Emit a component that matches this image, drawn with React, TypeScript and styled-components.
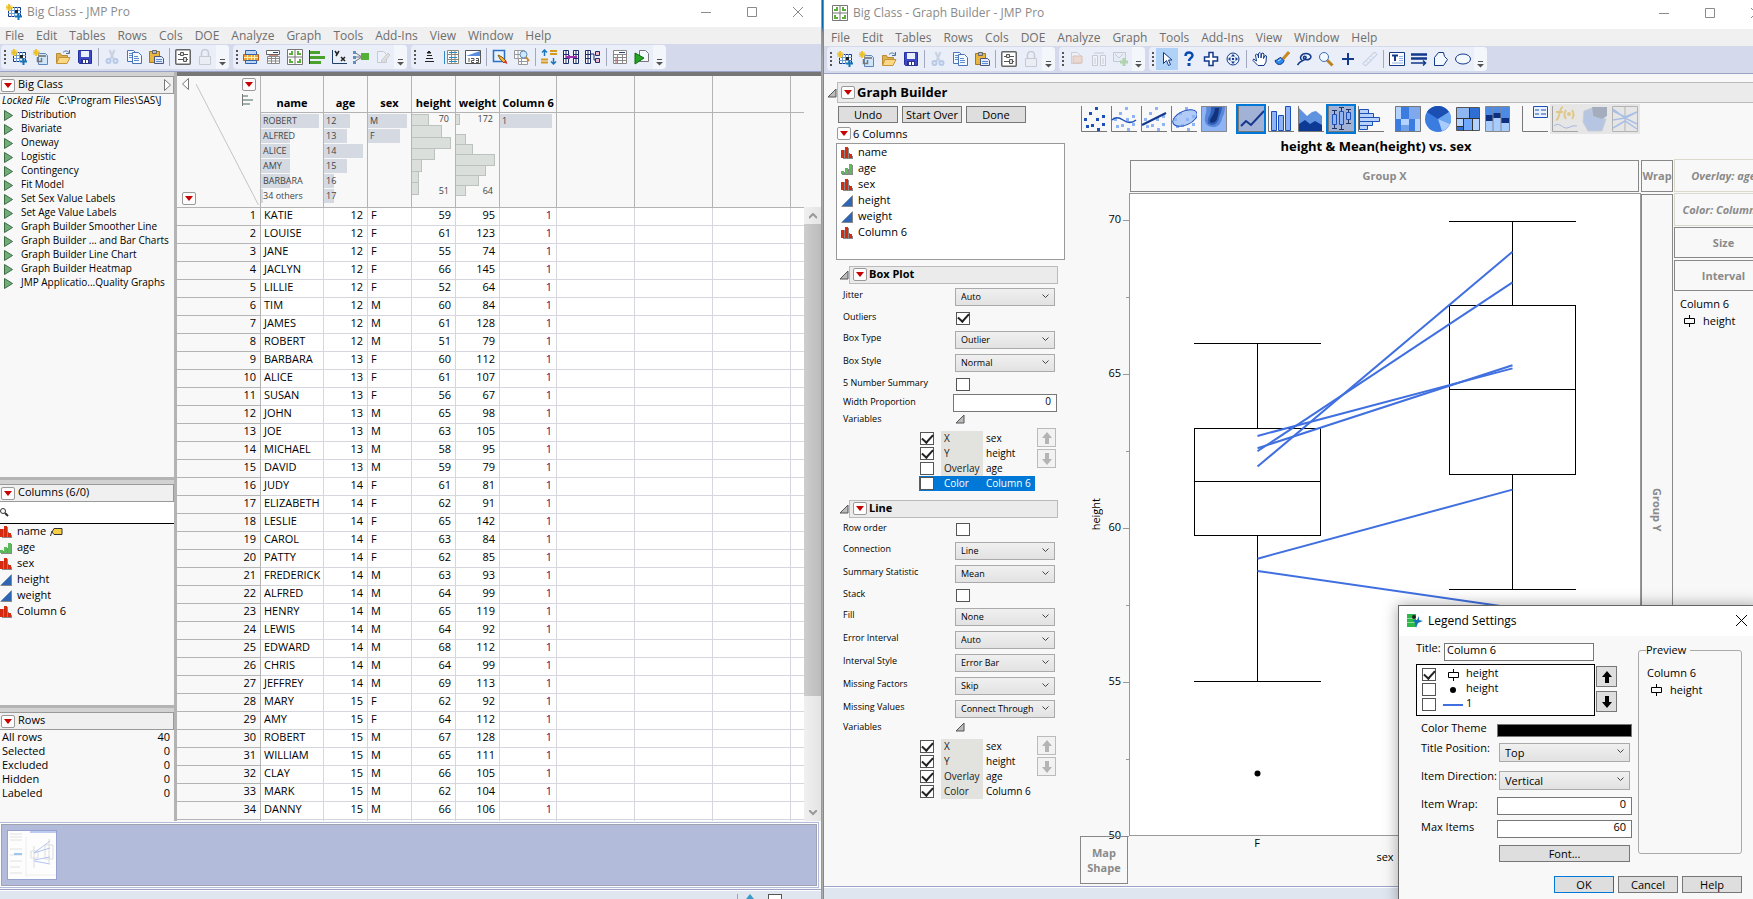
import React from "react";
import styled, { createGlobalStyle, css } from "styled-components";

const Global = createGlobalStyle`
  * { box-sizing: border-box; }
  body {
    margin: 0;
    overflow: hidden;
    background: #ababab;
    color: #000;
    font: 11px/14px "Open Sans", "Noto Sans", sans-serif;
  }
  button, input, select { font: inherit; color: inherit; margin: 0; padding: 0; border-radius: 0; }
  svg { display: block; }
`;

/* ---------- desktop and window frames ---------- */

const Desktop = styled.main`
  position: relative;
  display: grid;
  grid-template-columns: minmax(0, 821fr) 3px minmax(0, 929fr);
  height: 100vh;
  overflow: hidden;
`;

const DesktopGap = styled.div`
  background: linear-gradient(#0a6aa8 0 27px, #8a8a8a 32px, #ababab 60px);
  border-left: 1px solid #999;
  border-right: 1px solid #888;
`;

const Window = styled.section<{ $bleed?: number }>`
  display: flex;
  flex-direction: column;
  min-width: 0;
  height: calc(100vh + 16px);
  margin-right: ${(p) => -(p.$bleed ?? 0)}px;
  background: #f8f8f8;
`;

const TitleBar = styled.header<{ $h: number; $pad: number }>`
  display: flex;
  align-items: center;
  gap: 5px;
  flex: none;
  height: ${(p) => p.$h}px;
  padding: 0 0 4px ${(p) => p.$pad}px;
  background: #fff;
  color: #8a8a8a;
`;

const WindowName = styled.h1`
  flex: 1;
  margin: 0;
  font-size: 12px;
  font-weight: 400;
`;

const Caption = styled.button`
  display: grid;
  place-items: center;
  width: 46px;
  height: 20px;
  margin-left: -5px;
  border: 0;
  background: none;
  color: #8a8a8a;
`;

const MenuBar = styled.nav<{ $pad: number }>`
  display: flex;
  flex: none;
  gap: 12px;
  height: 17px;
  padding-left: ${(p) => p.$pad}px;
  background: #f0f0f0;
`;

const MenuItem = styled.button`
  border: 0;
  background: none;
  color: #6e6e6e;
  font-size: 12px;
  line-height: 16px;
`;

const ToolBar = styled.div<{ $pad: number }>`
  display: flex;
  flex: none;
  gap: 4px;
  height: 28px;
  padding: 1px 0 2px ${(p) => p.$pad}px;
  background: #d4d9ec;
  border-bottom: 1px solid #9aa2c8;
`;

const ToolGroup = styled.div`
  display: flex;
  align-items: center;
  background: #e9eef8;
  border-radius: 4px;
`;

const Grip = styled.i`
  width: 7px;
  height: 16px;
  background: linear-gradient(#555 2px, transparent 2px) 3px 1px / 2px 4px repeat-y;
`;

const ToolSep = styled.i`
  width: 1px;
  height: 18px;
  margin: 0 2px;
  background: #a4a8bc;
`;

const ToolButton = styled.button<{ $on?: boolean; $off?: boolean }>`
  display: grid;
  place-items: center;
  width: 22px;
  height: 22px;
  border: 0;
  background: ${(p) => (p.$on ? "#b0d2f7" : "none")};
  opacity: ${(p) => (p.$off ? 0.35 : 1)};
`;

const Overflow = styled.button`
  align-self: stretch;
  display: grid;
  place-items: end center;
  width: 13px;
  padding-bottom: 3px;
  border: 0;
  border-radius: 0 4px 4px 0;
  background: #f3f6fb;
`;

const StatusBar = styled.footer<{ $h: number }>`
  display: flex;
  justify-content: flex-end;
  gap: 14px;
  flex: none;
  height: ${(p) => p.$h}px;
  padding: 4px 39px 0 0;
  background: #e0e6f0;
  border-top: 1px solid #9aa2c8;
  box-shadow: inset 0 1px #fff;
`;

const StatusRule = styled.i`
  width: 1px;
  margin-right: -6px;
  background: #9aa2c8;
`;

/* ---------- toolbar drawings ---------- */

const B = "#12398a";
const Sheet = () => (
  <>
    <path d="M2.500 3.500h12v9h-12z" fill="#fff" stroke={B} />
    <path d="M2 6.500h13M2 9.500h13M5.500 3v10M8.500 3v10M11.500 3v10" stroke="#6d9bd6" />
    <path d="M9 6h3v3H9z" fill="#222" />
    <path d="M12.500 9v7M9 12.500h7" stroke="#1673b5" strokeWidth="2" />
    <path d="M3 0v7M0 3.500h7" stroke="#f2c62a" strokeWidth="2" />
    <path d="M.5 1l5 5M5.500 1l-5 5" stroke="#e8b820" />
  </>
);
const Page = ({ x = 3, y = 1, c = "#4a74b8" }: { x?: number; y?: number; c?: string }) => (
  <path d={`M${x}.5 ${y}.5h6l3 3v8h-9z`} fill="#f4f8ff" stroke={c} />
);

const drawings: Record<string, React.ReactNode> = {
  newTable: <Sheet />,
  newScript: (
    <>
      <path d="M5.500 4.500h7l2 2v9h-9z" fill="#cfe6fa" stroke="#5d87b8" />
      <path d="M5 7h8" stroke="#888" strokeWidth="2" />
      <path d="M4.500 8v4.500h4V9" stroke="#777" strokeWidth="1.500" fill="none" />
      <path d="M3 0v7M0 3.500h7" stroke="#f2c62a" strokeWidth="2" />
      <path d="M.5 1l5 5M5.500 1l-5 5" stroke="#e8b820" />
    </>
  ),
  open: (
    <>
      <path d="M1.500 14V4.500h4l1 2h6V9" fill="#e0b04e" stroke="#b88a34" />
      <path d="M1.500 14.500L4 8.500h11l-3 6z" fill="#fbd883" stroke="#c3953a" />
      <path d="M8 3.500c2-2 4-2 6 0M14.500 1v3.500H11" stroke="#4f7096" fill="none" />
    </>
  ),
  save: (
    <>
      <path d="M1.500 1.500h13v13h-12l-1-1z" fill="#3f49c8" stroke="#25309a" />
      <path d="M4 2h8v6H4z" fill="#e8f1fd" />
      <path d="M4 10h8v5H4z" fill="#2a3488" />
      <path d="M6 11h2v3H6zM9 11h2v3H9z" fill="#fff" />
    </>
  ),
  cut: (
    <>
      <path d="M5.500 1l4 9M10.500 1l-4 9" stroke="#8ea0bc" strokeWidth="2" />
      <circle cx="4.500" cy="12" r="2" fill="none" stroke="#5e86c8" strokeWidth="2" />
      <circle cx="11.500" cy="12" r="2" fill="none" stroke="#5e86c8" strokeWidth="2" />
    </>
  ),
  copy: (
    <>
      <Page x={1} y={1} />
      <Page x={6} y={3} />
      <path d="M8 7.500h4M8 9.500h5M8 11.500h5M3 4.500h3M3 6.500h3M3 8.500h3" stroke="#5d8cd0" />
    </>
  ),
  paste: (
    <>
      <path d="M1.500 2.500h10v11h-10z" fill="#e8b53e" stroke="#a4781c" />
      <path d="M4.500 1.500h4v3h-4z" fill="#b9b9c8" stroke="#666" />
      <path d="M6.500 7.500h7l2 2v5h-9z" fill="#e3ebfa" stroke="#4a5578" />
      <path d="M8 10.500h6M8 12.500h6" stroke="#5d8cd0" />
    </>
  ),
  prefs: (
    <>
      <rect x=".75" y=".75" width="14.500" height="14.500" rx="1" fill="#fff" stroke="#666" strokeWidth="1.500" />
      <path d="M3 5.500h3M9 5.500h4M3 10.500h5M11 10.500h2" stroke="#555" />
      <path d="M5.500 3.500h3v3h-3zM8.500 8.500h3v4h-3z" fill="#ddd" stroke="#555" />
    </>
  ),
  lock: (
    <>
      <path d="M4.500 7V4a3.500 3.500 0 017 0v3" fill="none" stroke="#888" strokeWidth="1.500" />
      <path d="M2.500 7.500h11v8h-11z" fill="#eee" stroke="#888" />
    </>
  ),
  database: (
    <>
      <path d="M.5 5.500h15v6H.5z" fill="#f0a53a" stroke="#b85a1c" />
      <path d="M2.500 1.500h10l1 1v3h-11zM2.500 11.500h11v3h-11z" fill="#bcd6f5" stroke="#2f62ac" />
      <path d="M1 8.500h14M4.500 6v5M8.500 6v5M11.500 6v5" stroke="#fff2b0" />
    </>
  ),
  summary: (
    <>
      <path d="M1.500 1.500h13v4h-13z" fill="#fff" stroke="#666" />
      <path d="M8 3.500h5" stroke="#26417c" />
      <path d="M2.500 7.500h12v7h-12zM6.500 7v8M10.500 7v8M2 9.500h13M2 12h13" fill="#fff" stroke="#888" />
      <path d="M4 6.500h9" stroke="#d98a7a" />
    </>
  ),
  graph: (
    <>
      <path d="M.5.5h15v15H.5zM8 0v16M0 8h16" fill="#fff" stroke="#777" />
      <path d="M2 6V4h2V2h2v4zM10 6V2h2v2h2v2zM2 14v-4h2v2h2v2zM10 14v-2h2v-2h2v4z" fill="#5fae3c" />
    </>
  ),
  bars: (
    <>
      <path d="M.5 1v14" stroke="#333" />
      <path d="M1 2h10v3H1zM1 7h15v3H1zM1 12h11v3H1z" fill="#4aa22c" />
    </>
  ),
  yx: (
    <>
      <path d="M1.500 1v13.500H16" stroke="#1e3f66" fill="none" />
      <path d="M4 2l2 3M8 2L5 7M10 8l4 4M14 8l-4 4" stroke="#222" strokeWidth="1.500" />
    </>
  ),
  modeling: (
    <>
      <path d="M1 3l8 5-8 5M1 8h8" stroke="#777" fill="none" />
      <path d="M0 2h3v3H0zM0 7h3v3H0zM0 12h3v3H0z" fill="#5b8fc8" />
      <path d="M8 4h8v7H8z" fill="#55b03a" />
    </>
  ),
  notes: (
    <>
      <Page x={2} y={2} c="#888" />
      <path d="M6 12l7-8 2 2-7 8z" fill="#d9c8a0" stroke="#888" />
    </>
  ),
  sort: <path d="M8 2l2 2H6zM6 6.500h5M5 9.500h7M4 12.500h9" stroke="#222" fill="#222" />,
  recode: (
    <>
      <path d="M4.500 1.500h11v13h-11zM8.500 1v14M12 1v14M4 5.500h12M4 10.500h12" fill="#fff" stroke="#8a8a7a" />
      <path d="M1.500 2v13M6 3.500h8M6 8.500h8M6 12.500h8" stroke="#3289bf" />
    </>
  ),
  format: (
    <>
      <path d="M.5 1.500h15v13H.5z" fill="#fff" stroke="#555" />
      <path d="M1 7l14-5v5z" fill="#5a8ce0" />
      <path d="M4 9v4M6 9.500h3v2H6.500v2H9M11 9.500h2.500v4H11M11 11.500h2" stroke="#555" fill="none" />
    </>
  ),
  select: (
    <>
      <path d="M1.500 1.500h11v11h-11z" fill="#e6f3ff" stroke="#2e6fc4" strokeWidth="1.500" />
      <path d="M6 6l2 4 4 4 2-2-4-4z" fill="#f4b73a" stroke="#8a5a14" />
      <path d="M11.500 13.500l2.500-2.500 1.500 4z" fill="#c33" />
    </>
  ),
  find: (
    <>
      <path d="M.5 1.500h10v8H.5zM4.500 9.500h9v6h-9zM4 1v9M7.500 1v14M.5 5.500h10M4.500 12.500h9" fill="#fff" stroke="#999" />
      <circle cx="9.500" cy="5.500" r="3.500" fill="#cfe8fb" stroke="#5b87b8" />
      <path d="M12 8l3 4" stroke="#c98a2a" strokeWidth="2" />
    </>
  ),
  swap: (
    <>
      <path d="M3.500 7V1M1 3.500L3.500 1 6 3.500M12.500 9v6M10 12.500l2.500 2.500 2.500-2.500" stroke="#1f77bd" strokeWidth="1.500" fill="none" />
      <path d="M9 2h7M9 5h7M0 10.500h7M0 13.500h7" stroke="#d79a20" strokeWidth="2" />
    </>
  ),
  join: (
    <>
      <path d="M.5 1.500h5v13h-5zM10.500 1.500h5v13h-5zM0 5.500h6M0 9.500h6M10 5.500h6M10 9.500h6M3 1v14M13 1v14" fill="#fff" stroke="#1b2e6a" />
      <path d="M3 8h11M6 6v4" stroke="#a02fae" strokeWidth="2" />
    </>
  ),
  split: (
    <>
      <path d="M.5 1.500h5v13h-5zM0 5.500h6M0 9.500h6M3 1v14" fill="#fff" stroke="#1b2e6a" />
      <path d="M6 5h3v6h5" fill="none" stroke="#1b2e6a" />
      <path d="M10.500 2.500h4v4h-4zM10.500 9.500h4v4h-4z" fill="#f4b9c9" stroke="#1b2e6a" />
    </>
  ),
  tabulate: (
    <>
      <path d="M1.500 1.500h13v13h-13zM1 5.500h14M1 8.500h14M1 11.500h14M5.500 5v10M10.500 5v10" fill="#fff" stroke="#888" />
      <path d="M7 3.500h6" stroke="#26417c" />
      <path d="M3 10h2M3 13h2" stroke="#c55" />
    </>
  ),
  run: (
    <>
      <Page x={5} y={1} c="#777" />
      <path d="M1 4l9 5-9 6z" fill="#22a522" stroke="#0b6b0b" />
    </>
  ),
  rerun: (
    <>
      <Page x={2} y={1} c="#999" />
      <path d="M4 5h9v7H4z" fill="#f1b28a" stroke="#c86a3a" />
    </>
  ),
  compare: <path d="M1.500 4.500h5v10h-5zM9.500 4.500h5v10h-5zM3 2h10M4 7v6M12 7v6" fill="#fff" stroke="#888" />,
  addGraph: (
    <>
      <path d="M.5 1.500h12v9H.5zM2 3l4 4 4-4" fill="#dfeaf5" stroke="#888" />
      <path d="M11 7v8M7 11h8" stroke="#4aa22c" strokeWidth="3" />
    </>
  ),
  arrow: <path d="M4.500 1.500v11l3-3 2 5 2-1-2-4.500h3.500z" fill="#fff" stroke={B} />,
  help: (
    <>
      <path d="M4.500 5c0-4.500 7-4.500 7-.5 0 2.500-3.500 2.500-3.500 5.500" fill="none" stroke="#0a4bb0" strokeWidth="2.500" />
      <path d="M6.500 12h3v3h-3z" fill="#0a4bb0" />
    </>
  ),
  plus: <path d="M6 1.500h4V6h4.500v4H10v4.500H6V10H1.500V6H6z" fill="#fff" stroke={B} strokeWidth="1.500" />,
  scroller: (
    <>
      <circle cx="8" cy="8" r="6" fill="#eaf1fc" stroke={B} />
      <path d="M8 3l2 2.500H6zM8 13l2-2.500H6zM3 8l2.500-2v4zM13 8l-2.500-2v4zM7 7h2v2H7z" fill={B} />
    </>
  ),
  hand: (
    <path
      d="M6 14.500L1 9.500 1.500 8l3 2L3.500 4l1-1L6 4l.5 3V2.500L8 1.500l1 1V7l.5-4.500L11 2l1 1-.5 4.500L13 4.500l1.500.5L14 11l-2 3.500z"
      fill="#fff"
      stroke={B}
    />
  ),
  brush: (
    <>
      <path d="M9 8l6-7" stroke="#c98a20" strokeWidth="3" />
      <path d="M1 9.500c2 0 4-3 6-3l3 3c-1 5-8 5.500-9 0z" fill="#2c8af0" stroke={B} />
      <path d="M4 10l3-2" stroke="#cfe6ff" />
    </>
  ),
  lasso: (
    <path
      d="M6 9.500C3 7 5 2.500 10 2.500s6 4 3.500 5.500-6.500.5-6-1.500 3-1 2.500.5-2 2.500-4 3-3 1.500-4.500 4"
      fill="none"
      stroke={B}
      strokeWidth="1.500"
    />
  ),
  zoom: (
    <>
      <path d="M9 9l5.500 5.500" stroke="#b98420" strokeWidth="3" />
      <circle cx="6" cy="6" r="4.500" fill="#f2f8ff" stroke="#3a6db8" />
    </>
  ),
  cross: <path d="M8 2v12M2 8h12" stroke={B} strokeWidth="2" />,
  ruler: <path d="M1 12.500L12.500 1 15 3.500 3.500 15zM5 10.500l1 1M7.500 8l1 1M10 5.500l1 1" fill="#eee" stroke="#5577bb" />,
  text: (
    <>
      <path d="M.5 1.500h15v13H.5z" fill="#fff" stroke={B} />
      <path d="M3 4.500h6M6 4v6" stroke={B} strokeWidth="2" />
      <path d="M10 5.500h4M10 7.500h4M10 9.500h4M3 12h11" stroke="#8fb0e0" />
    </>
  ),
  lines: (
    <>
      <path d="M0 3.500h16M0 7.500h16" stroke={B} strokeWidth="2.500" />
      <path d="M0 12h14M12 9.500l2.500 2.500-2.500 2.500" stroke={B} strokeWidth="1.500" fill="none" />
    </>
  ),
  polygon: <path d="M1.500 14.500v-8l4-5h5l1 4 3 3-4 6z" fill="#f4f8ff" stroke={B} />,
  oval: <ellipse cx="8" cy="8" rx="7.500" ry="5" fill="#f4f8ff" stroke={B} />,
};

const Drawing = ({ name }: { name: string }) => (
  <svg width="16" height="16" viewBox="0 0 16 16" fill="none" aria-hidden>
    {drawings[name]}
  </svg>
);

/* A "|" is a separator, "-" before a name dims it, "*" marks the active tool. */
const Tools = ({ items }: { items: string }) => (
  <ToolGroup role="toolbar">
    <Grip />
    {items.split(" ").map((it, i) =>
      it === "|" ? (
        <ToolSep key={i} />
      ) : (
        <ToolButton key={i} $on={it[0] === "*"} $off={it[0] === "-"} aria-label={it.replace(/^[-*]/, "")}>
          <Drawing name={it.replace(/^[-*]/, "")} />
        </ToolButton>
      )
    )}
    <Overflow aria-label="More tools">
      <svg width="7" height="7" viewBox="0 0 7 7">
        <path d="M1 .5h5" stroke="#555" />
        <path d="M0 3h7L3.500 6.500z" fill="#555" />
      </svg>
    </Overflow>
  </ToolGroup>
);

const FILE_TOOLS = "newTable newScript open save | -cut copy paste | prefs -lock";
const MENUS = "File,Edit,Tables,Rows,Cols,DOE,Analyze,Graph,Tools,Add-Ins,View,Window,Help".split(",");

const Menus = ({ pad }: { pad: number }) => (
  <MenuBar $pad={pad}>
    {MENUS.map((m) => (
      <MenuItem key={m}>{m}</MenuItem>
    ))}
  </MenuBar>
);

const Captions = () => (
  <>
    <Caption aria-label="Minimize">
      <svg width="10" height="10"><path d="M0 5.500h10" stroke="currentColor" /></svg>
    </Caption>
    <Caption aria-label="Maximize">
      <svg width="10" height="10"><path d="M.5.5h9v9h-9z" fill="none" stroke="currentColor" /></svg>
    </Caption>
    <Caption aria-label="Close">
      <svg width="10" height="10"><path d="M0 0l10 10M10 0L0 10" stroke="currentColor" /></svg>
    </Caption>
  </>
);

/* ---------- shared small controls ---------- */

const RedBox = styled.button`
  display: grid;
  place-items: center;
  flex: none;
  width: 14px;
  height: 13px;
  border: 1px solid #999;
  border-radius: 2px;
  background: #fdfdfd;
`;
const RedTriangle = ({ label }: { label: string }) => (
  <RedBox aria-label={label}>
    <svg width="8" height="5"><path d="M0 0h8L4 5z" fill="#c80000" /></svg>
  </RedBox>
);

const Bare = styled.button`
  flex: none;
  border: 0;
  background: none;
`;
const Disclosure = ({ label }: { label: string }) => (
  <Bare aria-label={label}>
    <svg width="10" height="10"><path d="M9 1v8H1z" fill="#bbb" stroke="#555" /></svg>
  </Bare>
);

const Check = styled.input.attrs({ type: "checkbox" })`
  appearance: none;
  display: grid;
  place-items: center;
  flex: none;
  width: 14px;
  height: 13px;
  border: 1px solid #555;
  background: #fff;
  &:checked::after {
    content: "";
    width: 5px;
    height: 9px;
    margin-top: -3px;
    border: solid #222;
    border-width: 0 2px 2px 0;
    transform: rotate(42deg);
  }
`;

const Field = styled.input<{ $right?: boolean }>`
  width: 100%;
  height: 18px;
  padding: 0 5px 5px 2px;
  border: 1px solid #777;
  background: #fff;
  line-height: 11px;
  text-align: ${(p) => (p.$right ? "right" : "left")};
`;

const SelectWrap = styled.span<{ $tall?: boolean }>`
  position: relative;
  display: block;
  select {
    appearance: none;
    display: block;
    width: 100%;
    height: ${(p) => (p.$tall ? 19 : 18)}px;
    padding: 0 0 0 5px;
    border: 1px solid #aaa;
    background: linear-gradient(#f0f0f0, #e2e2e2);
    font-size: ${(p) => (p.$tall ? 11 : 9)}px;
  }
  svg {
    position: absolute;
    right: 6px;
    top: 6px;
    pointer-events: none;
  }
`;
const Select = ({ id, value, tall }: { id: string; value: string; tall?: boolean }) => (
  <SelectWrap $tall={tall}>
    <select id={id} defaultValue={value}>
      <option>{value}</option>
    </select>
    <svg width="7" height="5"><path d="M.5.5l3 3 3-3" fill="none" stroke="#444" /></svg>
  </SelectWrap>
);

const PushButton = styled.button<{ $primary?: boolean }>`
  height: 17px;
  min-width: 60px;
  border: 1px solid ${(p) => (p.$primary ? "#0078d7" : "#777")};
  background: #dedede;
  line-height: 14px;
`;

const ArrowBox = styled.button<{ $dim?: boolean }>`
  display: grid;
  place-items: center;
  width: ${(p) => (p.$dim ? 19 : 21)}px;
  height: ${(p) => (p.$dim ? 19 : 21)}px;
  border: 1px solid ${(p) => (p.$dim ? "#bbb" : "#777")};
  background: ${(p) => (p.$dim ? "#f2f2f2" : "#dedede")};
  color: ${(p) => (p.$dim ? "#b4b4b4" : "#000")};
`;
const ArrowButton = ({ down, dim }: { down?: boolean; dim?: boolean }) => (
  <ArrowBox $dim={dim} aria-label={down ? "Move down" : "Move up"}>
    <svg width="10" height="12" fill="currentColor">
      <path d={down ? "M3 0h4v6h3l-5 6-5-6h3z" : "M3 12h4V6h3L5 0 0 6h3z"} />
    </svg>
  </ArrowBox>
);

const TypeIcon = ({ type }: { type: string }) => (
  <svg width="13" height="12" viewBox="0 0 13 12" aria-hidden>
    {type === "nominal" && (
      <>
        <path d="M2 3h3V1h3v5h1v3h3v3H2z" fill="#888" />
        <path d="M0 3h3v8H0zM4 0h3v11H4zM8 7h3v4H8z" fill="#d42a10" />
      </>
    )}
    {type === "ordinal" && (
      <>
        <path d="M1 9h3V6h4V2h4v10H1z" fill="#888" />
        <path d="M0 8h3v3H0zM4 5h3v6H4zM8 1h3v10H8z" fill="#5cba5c" />
      </>
    )}
    {type === "continuous" && (
      <>
        <path d="M12 0v12H0z" fill="#888" />
        <path d="M11 1v10H1z" fill="#2f66b4" />
      </>
    )}
  </svg>
);

const COLUMNS = [
  ["name", "nominal"],
  ["age", "ordinal"],
  ["sex", "nominal"],
  ["height", "continuous"],
  ["weight", "continuous"],
  ["Column 6", "nominal"],
];

const ColumnItem = styled.li`
  display: flex;
  align-items: center;
  gap: 4px;
  height: 16px;
  > svg { flex: none; }
  span { padding-bottom: 2px; }
`;

/* ---------- data table window ---------- */

const TableBody = styled.div`
  display: flex;
  flex: 1;
  min-height: 0;
`;

const SidePanels = styled.aside`
  display: flex;
  flex-direction: column;
  flex: none;
  width: 177px;
  border-right: 3px solid #b4b4b4;
`;

const Panel = styled.section<{ $h?: number }>`
  display: flex;
  flex-direction: column;
  min-height: 0;
  overflow: hidden;
  ${(p) =>
    p.$h
      ? css`
          flex: none;
          height: ${p.$h}px;
          border-top: 3px solid #b4b4b4;
        `
      : css`flex: 1;`}
  &::before {
    content: "";
    flex: none;
    height: 4px;
    background: #d2d2d2;
  }
`;

const PanelHead = styled.h2`
  display: flex;
  align-items: center;
  flex: none;
  gap: 3px;
  height: 18px;
  margin: 0;
  padding: 0 2px 0 1px;
  border: 1px solid #999;
  border-left: 0;
  background: #f0f0f0;
  font-size: 11px;
  font-weight: 400;
  span { flex: 1; padding-bottom: 2px; }
`;

const List = styled.ul`
  margin: 0;
  padding: 0;
  list-style: none;
`;

const Script = styled.li`
  display: flex;
  align-items: center;
  gap: 8px;
  height: 14px;
  padding-left: 4px;
  font-size: 10px;
  white-space: nowrap;
  span { padding-bottom: 2px; }
`;

const FileLine = styled.p`
  display: flex;
  gap: 8px;
  flex: none;
  margin: 0;
  padding-left: 2px;
  height: 14px;
  font-size: 10px;
  line-height: 13px;
  white-space: nowrap;
`;

const SearchLine = styled.label`
  display: flex;
  align-items: center;
  flex: none;
  height: 22px;
  border-bottom: 1px solid #000;
  background: #fff;
  input { flex: 1; min-width: 0; border: 0; outline: 0; }
`;

const Counts = styled.dl`
  display: grid;
  grid-template-columns: 1fr auto;
  margin: 0;
  padding: 0 4px 0 2px;
  line-height: 14px;
  dd { margin: 0; text-align: right; }
`;

const TableArea = styled.div`
  flex: 1;
  min-width: 0;
  overflow: hidden;
  border-top: 4px solid #777;
`;

const Data = styled.table`
  width: 100%;
  table-layout: fixed;
  border-spacing: 0;
  th, td {
    height: 18px;
    padding: 0 4px 3px 3px;
    border: solid #d6d6de;
    border-width: 0 1px 1px 0;
    background: #fff;
    line-height: 14px;
    white-space: nowrap;
    overflow: hidden;
  }
  th:first-child, thead td, thead th {
    border-color: #b4b4b4;
    background: #f8f8f8;
  }
  thead th { height: 37px; padding: 0 0 2px; vertical-align: bottom; font-weight: 700; }
  thead td { height: 95px; padding: 0; vertical-align: top; }
  tbody th { text-align: right; font-weight: 400; }
  tr > :last-child { border-right: 0; }
`;

const NumCell = styled.td<{ $purple?: boolean }>`
  text-align: right;
  color: ${(p) => (p.$purple ? "#600060" : "inherit")};
`;

const Corner = styled.div`
  display: flex;
  justify-content: space-between;
  height: 129px;
  padding: 2px 4px 0 5px;
`;
const CornerSide = styled.div<{ $spread?: boolean }>`
  display: flex;
  flex-direction: column;
  gap: 3px;
  justify-content: ${(p) => (p.$spread ? "space-between" : "flex-start")};
`;
const Slash = styled.svg`
  margin: 0 -18px 0 -1px;
`;

const Levels = styled.ul`
  margin: 0;
  padding: 1px 0 0;
  list-style: none;
  font-size: 9px;
  color: #444;
`;
const Level = styled.li`
  display: flex;
  height: 15px;
  line-height: 14px;
  white-space: nowrap;
`;
const LevelBar = styled.span`
  height: 14px;
  padding-left: 2px;
  background: #d5dae2;
`;

const LevelBars = ({ items }: { items: [string, number][] }) => (
  <Levels>
    {items.map(([t, w]) => (
      <Level key={t}>
        <LevelBar style={{ width: w }}>{t}</LevelBar>
      </Level>
    ))}
  </Levels>
);

const Hist = ({ bars, top, bottom }: { bars: [number, number, number][]; top: string; bottom: string }) => (
  <svg width="43" height="94" fontSize="9" fill="#444">
    {bars.map(([y, h, w]) => (
      <rect key={y} x="-.5" y={y + 0.5} width={w} height={h} fill="#dadfdc" stroke="#bcc2be" />
    ))}
    <text x="37" y="9" textAnchor="end">{top}</text>
    <text x="37" y="81" textAnchor="end">{bottom}</text>
  </svg>
);

const ROWS: [string, number, string, number, number][] = [
  ["KATIE", 12, "F", 59, 95], ["LOUISE", 12, "F", 61, 123], ["JANE", 12, "F", 55, 74],
  ["JACLYN", 12, "F", 66, 145], ["LILLIE", 12, "F", 52, 64], ["TIM", 12, "M", 60, 84],
  ["JAMES", 12, "M", 61, 128], ["ROBERT", 12, "M", 51, 79], ["BARBARA", 13, "F", 60, 112],
  ["ALICE", 13, "F", 61, 107], ["SUSAN", 13, "F", 56, 67], ["JOHN", 13, "M", 65, 98],
  ["JOE", 13, "M", 63, 105], ["MICHAEL", 13, "M", 58, 95], ["DAVID", 13, "M", 59, 79],
  ["JUDY", 14, "F", 61, 81], ["ELIZABETH", 14, "F", 62, 91], ["LESLIE", 14, "F", 65, 142],
  ["CAROL", 14, "F", 63, 84], ["PATTY", 14, "F", 62, 85], ["FREDERICK", 14, "M", 63, 93],
  ["ALFRED", 14, "M", 64, 99], ["HENRY", 14, "M", 65, 119], ["LEWIS", 14, "M", 64, 92],
  ["EDWARD", 14, "M", 68, 112], ["CHRIS", 14, "M", 64, 99], ["JEFFREY", 14, "M", 69, 113],
  ["MARY", 15, "F", 62, 92], ["AMY", 15, "F", 64, 112], ["ROBERT", 15, "M", 67, 128],
  ["WILLIAM", 15, "M", 65, 111], ["CLAY", 15, "M", 66, 105], ["MARK", 15, "M", 62, 104],
  ["DANNY", 15, "M", 66, 106],
];

const ScrollColumn = styled.div`
  display: flex;
  flex-direction: column;
  flex: none;
  width: 17px;
  padding-top: 131px;
  border-top: 4px solid #777;
  background: #f8f8f8;
`;
const ScrollTrack = styled.div`
  display: grid;
  grid-template-rows: 17px 79fr 18fr 17px;
  flex: 1;
  background: linear-gradient(90deg, #f0f0f0, #e4e4e4);
  > button { display: grid; place-items: center; border: 0; background: none; }
  > i { background: linear-gradient(90deg, #cdcdcd, #bcbcbc); }
`;

const Shelf = styled.div`
  flex: none;
  height: 66px;
  margin: 1px 2px 1px 0;
  padding: 1px;
  border: 1px solid #b3bbdb;
  border-left: 0;
  background: #fff;
`;
const ShelfInner = styled.div`
  height: 62px;
  padding: 5px;
  border: 1px solid #a0a2b0;
  background: #b3bbdb;
`;
const Thumb = styled.button`
  display: block;
  width: 50px;
  height: 50px;
  padding: 0;
  border: 1px solid #98a2d0;
  background: #fdfdfd;
`;

const SCRIPTS = [
  "Distribution", "Bivariate", "Oneway", "Logistic", "Contingency", "Fit Model",
  "Set Sex Value Labels", "Set Age Value Labels", "Graph Builder Smoother Line",
  "Graph Builder ... and Bar Charts", "Graph Builder Line Chart", "Graph Builder Heatmap",
  "JMP Applicatio...Quality Graphs",
];

const Chevron = ({ up }: { up?: boolean }) => (
  <svg width="8" height="6"><path d={up ? "M0 5l4-4 4 4" : "M0 0l4 4 4-4"} fill="none" stroke="#999" strokeWidth="2" /></svg>
);

const TableWindow = () => (
  <Window>
    <TitleBar $h={27} $pad={6}>
      <Drawing name="newTable" />
      <WindowName>Big Class - JMP Pro</WindowName>
      <Captions />
    </TitleBar>
    <Menus pad={5} />
    <ToolBar $pad={1}>
      <Tools items={FILE_TOOLS} />
      <Tools items="database summary graph bars yx modeling -notes" />
      <Tools items="sort recode format | select find | swap join split | tabulate run" />
    </ToolBar>
    <TableBody>
      <SidePanels>
        <Panel>
          <PanelHead>
            <RedTriangle label="Table menu" />
            <span>Big Class</span>
            <svg width="7" height="12"><path d="M.5.5l6 5.500-6 5.500z" fill="#fff" stroke="#777" /></svg>
          </PanelHead>
          <FileLine>
            <em>Locked File</em>
            <span>C:\Program Files\SAS\J</span>
          </FileLine>
          <List>
            {SCRIPTS.map((s) => (
              <Script key={s}>
                <Bare aria-label={`Run ${s}`}>
                  <svg width="9" height="11"><path d="M.5.5l8 5-8 5z" fill="#6fae78" stroke="#3d6b45" /></svg>
                </Bare>
                <span>{s}</span>
              </Script>
            ))}
          </List>
        </Panel>
        <Panel $h={228}>
          <PanelHead>
            <RedTriangle label="Columns menu" />
            <span>Columns (6/0)</span>
          </PanelHead>
          <SearchLine>
            <svg width="9" height="9"><path d="M5 5l3 3" stroke="#333" strokeWidth="2" /><circle cx="3" cy="3" r="2.500" fill="none" stroke="#333" /></svg>
            <input aria-label="Search columns" />
          </SearchLine>
          <List>
            {COLUMNS.map(([n, t]) => (
              <ColumnItem key={n}>
                <TypeIcon type={t} />
                <span>{n}</span>
                {n === "name" && (
                  <svg width="13" height="10"><path d="M4 1.500h8v6H4L2 5z" fill="#f7cf45" stroke="#333" /><path d="M2 4L.5 9" stroke="#333" /></svg>
                )}
              </ColumnItem>
            ))}
          </List>
        </Panel>
        <Panel $h={116}>
          <PanelHead>
            <RedTriangle label="Rows menu" />
            <span>Rows</span>
          </PanelHead>
          <Counts>
            {[["All rows", 40], ["Selected", 0], ["Excluded", 0], ["Hidden", 0], ["Labeled", 0]].map(([k, v]) => (
              <React.Fragment key={k}>
                <dt>{k}</dt>
                <dd>{v}</dd>
              </React.Fragment>
            ))}
          </Counts>
        </Panel>
      </SidePanels>
      <TableArea>
        <Data>
          <colgroup>
            {[84, 63, 44, 44, 44, 44, 57, 78, 78, 78].map((w, i) => (
              <col key={i} width={w} />
            ))}
            <col />
          </colgroup>
          <thead>
            <tr>
              <th rowSpan={2}>
                <Corner>
                  <CornerSide $spread>
                    <svg width="7" height="12"><path d="M6.500.5L.5 6l6 5.500z" fill="#fff" stroke="#777" /></svg>
                    <RedTriangle label="Rows options" />
                  </CornerSide>
                  <Slash width="64" height="127">
                    <path d="M0 6l63 122" stroke="#c4c4c4" />
                  </Slash>
                  <CornerSide>
                    <RedTriangle label="Columns options" />
                    <svg width="12" height="12"><path d="M.5 0v12" stroke="#777" /><path d="M1 1h5v2H1zM1 5h10v2H1zM1 9h7v2H1z" fill="#9fb0a8" /></svg>
                  </CornerSide>
                </Corner>
              </th>
              {["name", "age", "sex", "height", "weight", "Column 6", "", "", "", ""].map((h, i) => (
                <th key={i}>{h}</th>
              ))}
            </tr>
            <tr>
              <td>
                <LevelBars items={[["ROBERT", 58], ["ALFRED", 29], ["ALICE", 29], ["AMY", 29], ["BARBARA", 29], ["34 others", 0]]} />
              </td>
              <td>
                <LevelBars items={[["12", 26], ["13", 23], ["14", 39], ["15", 23], ["16", 10], ["17", 10]]} />
              </td>
              <td>
                <LevelBars items={[["M", 39], ["F", 32]]} />
              </td>
              <td>
                <Hist top="70" bottom="51" bars={[[1, 11, 17], [12, 12, 30], [24, 11, 39], [35, 11, 23], [46, 12, 10], [58, 11, 7], [69, 12, 7]]} />
              </td>
              <td>
                <Hist top="172" bottom="64" bars={[[1, 10, 4], [21, 10, 10], [31, 10, 17], [41, 11, 39], [52, 10, 30], [62, 10, 23], [72, 10, 10]]} />
              </td>
              <td>
                <LevelBars items={[["1", 52]]} />
              </td>
              <td /><td /><td /><td />
            </tr>
          </thead>
          <tbody>
            {ROWS.map(([n, a, s, h, w], i) => (
              <tr key={i}>
                <th scope="row">{i + 1}</th>
                <td>{n}</td>
                <NumCell>{a}</NumCell>
                <td>{s}</td>
                <NumCell>{h}</NumCell>
                <NumCell>{w}</NumCell>
                <NumCell $purple>1</NumCell>
                <td /><td /><td /><td />
              </tr>
            ))}
            <tr>
              <th scope="row" />
              {Array.from({ length: 10 }, (_, i) => <td key={i} />)}
            </tr>
          </tbody>
        </Data>
      </TableArea>
      <ScrollColumn>
        <ScrollTrack>
          <button aria-label="Scroll up"><Chevron up /></button>
          <i />
          <span />
          <button aria-label="Scroll down"><Chevron /></button>
        </ScrollTrack>
      </ScrollColumn>
    </TableBody>
    <Shelf>
      <ShelfInner>
        <Thumb aria-label="Graph Builder window">
          <svg width="48" height="48" fill="none">
            <path d="M22 1h26" stroke="#7f9be0" />
            <path d="M2 3h12M2 6h12M2 9h12M2 18h12M2 24h12M2 30h12M2 36h10M2 42h12" stroke="#e2e2e2" />
            <path d="M18 6v40M18 44h30" stroke="#eee" />
            <path d="M6 23h8" stroke="#9cc6ee" strokeWidth="2" />
            <path d="M23 20h7v7h-7zM26 15v22M37 14h8v14h-8zM41 8v24" stroke="#ddd" />
            <path d="M26 22L42 10M26 22l16-5M26 29l16-3M26 30l16 3" stroke="#b4c5f3" />
          </svg>
        </Thumb>
      </ShelfInner>
    </Shelf>
    <StatusBar $h={26}>
      <StatusRule />
      <svg width="8" height="12"><path d="M4 0l4 5H0z" fill="#3a9bc8" /></svg>
      <Check aria-label="Window lock" />
    </StatusBar>
  </Window>
);

/* ---------- graph builder window ---------- */

const BuilderBody = styled.div`
  display: flex;
  flex-direction: column;
  flex: 1;
  min-height: 0;
  padding: 8px 6px 0 3px;
`;

const OutlineRow = styled.div<{ $nested?: boolean }>`
  display: flex;
  align-items: center;
  margin: ${(p) => (p.$nested ? "0 7px 0 3px" : "0")};
`;
const OutlineHead = styled.h2<{ $big?: boolean }>`
  display: flex;
  align-items: center;
  flex: 1;
  gap: 2px;
  height: ${(p) => (p.$big ? 21 : 18)}px;
  margin: 0;
  padding: 0 3px 1px;
  border: 1px solid #bbb;
  background: #ebebeb;
  font-size: ${(p) => (p.$big ? 13 : 11)}px;
  font-weight: 700;
  span { padding-bottom: ${(p) => (p.$big ? 0 : 2)}px; }
`;

const BuilderMain = styled.div`
  display: flex;
  flex: 1;
  min-height: 0;
  gap: 15px;
`;

const Controls = styled.div`
  flex: none;
  width: 238px;
  padding: 3px 0 0 9px;
`;

const ButtonRow = styled.div`
  display: flex;
  gap: 4px;
  padding-left: 2px;
`;

const ColumnsHead = styled.div`
  display: flex;
  align-items: center;
  gap: 2px;
  height: 20px;
  padding: 1px 0 0 1px;
`;

const ColumnsBox = styled(List)`
  height: 117px;
  margin-bottom: 6px;
  padding: 1px 4px;
  border: 1px solid #999;
  background: #fff;
`;

const Settings = styled.div`
  padding: 1px 0 0 7px;
  margin-bottom: 9px;
  font-size: 9px;
`;
const Setting = styled.div<{ $h: number }>`
  display: grid;
  grid-template-columns: 110px 104px;
  align-items: center;
  height: ${(p) => p.$h}px;
  > :first-child { padding-bottom: 3px; }
  > :nth-child(2) { margin: 0 2px; }
  > ${Check} { margin: 0 3px; }
  > ${Field} { margin: 0; font-size: 10px; }
`;

const VariablesRow = styled.div`
  display: flex;
  justify-content: flex-end;
  gap: 2px;
  width: 214px;
  padding-right: 1px;
`;
const VarTable = styled.ul`
  margin: 3px 0 0;
  padding: 0;
  list-style: none;
  font-size: 10px;
`;
const VarRow = styled.li<{ $on?: boolean }>`
  display: grid;
  grid-template-columns: 21px 42px 52px;
  align-items: center;
  height: 15px;
  line-height: 14px;
  padding-left: 1px;
  white-space: nowrap;
  background: ${(p) => (p.$on ? "#0078d7" : "none")};
  color: ${(p) => (p.$on ? "#fff" : "#000")};
  label {
    height: 15px;
    padding-left: 3px;
    background: ${(p) => (p.$on ? "none" : "#e2e3de")};
    color: ${(p) => (p.$on ? "#fff" : "#222")};
  }
  span { height: 15px; padding-left: 3px; }
`;
const VarMoves = styled.div`
  display: flex;
  flex-direction: column;
  gap: 2px;
`;

const SettingRow = ({ label, value, check, field }: { label: string; value?: string; check?: boolean; field?: string }) => {
  const id = React.useId();
  return (
    <Setting $h={value ? 23 : field ? 18 : 20}>
      <label htmlFor={id}>{label}</label>
      {value && <Select id={id} value={value} />}
      {check !== undefined && <Check id={id} defaultChecked={check} />}
      {field && <Field id={id} defaultValue={field} $right />}
    </Setting>
  );
};

const Variables = ({ checked, selected }: { checked: boolean[]; selected?: number }) => {
  const id = React.useId();
  return (
    <>
      <Setting $h={16}>
        <span>Variables</span>
        <span><Disclosure label="Variables" /></span>
      </Setting>
      <VariablesRow>
        <VarTable>
          {[["X", "sex"], ["Y", "height"], ["Overlay", "age"], ["Color", "Column 6"]].map(([k, v], i) => (
            <VarRow key={k} $on={selected === i}>
              <Check id={id + k} defaultChecked={checked[i]} />
              <label htmlFor={id + k}>{k}</label>
              <span>{v}</span>
            </VarRow>
          ))}
        </VarTable>
        <VarMoves>
          <ArrowButton dim />
          <ArrowButton dim down />
        </VarMoves>
      </VariablesRow>
    </>
  );
};

const Graph = styled.div`
  display: flex;
  flex-direction: column;
  flex: 1;
  min-width: 0;
`;

const TypeBar = styled.div`
  display: flex;
  gap: 7px;
  flex: none;
  height: 31px;
  padding-top: 1px;
  margin-left: -1px;
`;
const TypeGroup = styled.div`display: flex;`;
const TypeButton = styled.button<{ $on?: boolean; $off?: boolean }>`
  display: grid;
  place-items: center;
  width: 30px;
  height: 30px;
  border: ${(p) => (p.$on ? "2px solid #0078d7" : "0")};
  background: ${(p) => (p.$on ? "#a2b1d6" : p.$off ? "#e6e6e6" : "none")};
`;

const L = "#1c4fb8";
const M = "#8fb4f5";
const D = "#12378c";
const axes = <path d="M.5 0v25.500H26" stroke="#777" fill="none" />;
const dots = (c: string) => (
  <path d="M14 1h3v3h-3zM8 6h3v3H8zM3 12h3v3H3zM21 9h3v3h-3zM15 12h3v3h-3zM10 18h3v3h-3zM21 17h3v3h-3zM5 19h3v3H5zM16 22h3v3h-3z" fill={c} />
);
const typeDrawings: Record<string, React.ReactNode> = {
  points: <>{axes}{dots(L)}</>,
  smoother: <>{axes}{dots(M)}<path d="M1 14c4-4 8-2 11 0s8 4 13 0" stroke={L} strokeWidth="1.500" fill="none" /></>,
  fit: <>{axes}{dots(M)}<path d="M1 19L25 7" stroke={D} strokeWidth="2" /></>,
  ellipse: <>{axes}{dots(M)}<ellipse cx="14" cy="12" rx="13" ry="7" transform="rotate(-24 14 12)" fill="#8fb4f5aa" stroke={L} /></>,
  contour: (
    <>
      <path d="M0 0h26v26H0z" fill="#8fb4f5" />
      <path d="M5 0h19c0 8-2 9-3 13s-4 9-10 8-8-5-7-10S6 5 5 0z" fill="#5a87d8" />
      <path d="M10 0h11c0 6-2 8-3 12s-3 7-7 7-5-3-4-6S11 6 10 0z" fill="#2f5fb8" />
      <path d="M14 2h4c0 4-1 7-2 11s-7 5-7 2S14 8 14 2z" fill="#12327c" />
      <path d="M.5.5h25v25H.5z" fill="none" stroke="#888" />
    </>
  ),
  line: <><path d="M.5 0v25.500H26" stroke="#777" fill="none" /><path d="M3 20l5-5 5 4L26 5" stroke={D} strokeWidth="2" fill="none" /></>,
  bar: <>{axes}<path d="M3.500 5.500h5v19h-5zM10.500 9.500h5v15h-5zM17.500.5h5v24h-5z" fill={M} stroke={L} /></>,
  area: <>{axes}<path d="M1 25V2l8 8 5-4 4-1 6 5v15z" fill="#5f93e0" /><path d="M1 25v-7l6-4 5 4 5-3 7 4v6z" fill="#0d3a94" /></>,
  box: (
    <>
      <path d="M.5 0v25.500H26" stroke="#777" fill="none" />
      <path d="M6.500 4v18M4 4.500h5M4 22.500h5M13.500 1v22M11 1.500h5M11 23.500h5M20.500 3v15M18 3.500h5M18 17.500h5" stroke="#1d3560" />
      <path d="M4.500 8.500h4v10h-4zM11.500 5.500h4v13h-4zM18.500 6.500h4v7h-4z" fill={M} stroke={L} />
    </>
  ),
  hist: <>{axes}<path d="M1.500 3.500h9v4h-9zM1.500 7.500h14v4h-14zM1.500 11.500h20v4h-20zM1.500 15.500h13v4h-13zM1.500 19.500h8v4h-8z" fill="#b9d2fb" stroke={L} /></>,
  heat: (
    <>
      <path d="M0 0h26v26H0z" fill="#b4d2ff" />
      <path d="M6 0h8v13H6zM0 13h6v13H0zM14 13h6v13h-6z" fill="#3a7ce0" />
      <path d="M20 0h6v13h-6zM14 0h6v13h-6z" fill="#7fa9ec" />
      <path d="M6 19h8v7H6z" fill="#6fa0ea" />
      <path d="M.5.5h25v25H.5z" fill="none" stroke="#777" />
    </>
  ),
  pie: (
    <>
      <circle cx="13" cy="13" r="13" fill="#3a7ce0" />
      <path d="M13 13L2 6a13 13 0 0122 0z" fill="#1b4fb4" />
      <path d="M13 13l11-7a13 13 0 011 12z" fill="#6aa5f0" />
      <path d="M13 13l12 5a13 13 0 01-8 7z" fill="#a9ccff" />
    </>
  ),
  treemap: (
    <>
      <path d="M1.500 1.500h23v23h-23z" fill="#b4d2ff" stroke="#555" />
      <path d="M14 2h10v10H14z" fill="#2f6fd4" />
      <path d="M2 2h12v10H2z" fill="#8fb8f2" />
      <path d="M9 13h8v11H9z" fill="#6fa8ff" />
      <path d="M2 21h6v3H2z" fill="#2f6fd4" />
      <path d="M1 12.500h24M14.500 2v10M8.500 12v13M17.500 12v13M2 20.500h6" stroke="#333" />
    </>
  ),
  mosaic: (
    <>
      <path d="M1 1h24v24H1z" fill="#a9ccff" />
      <path d="M1 1h7v8H1zM8 1h8v6H8zM16 1h8v11h-8z" fill="#4d8ae4" />
      <path d="M1 9h7v6H1zM8 7h8v5H8zM16 12h8v5h-8z" fill="#0c2f80" />
      <path d="M8 1v24M16 1v24M.5.5h24v25H.5z" stroke="#888" fill="none" />
    </>
  ),
  caption: (
    <>
      {axes}
      <path d="M11.500.5h14v11h-14z" fill="#eaf2ff" stroke={L} />
      <path d="M13 4h4M19 4h5M13 8h4M19 8h5" stroke={L} />
    </>
  ),
  formula: (
    <g opacity=".6">
      {axes}
      <path d="M4 14c4 0 3-13 7-13M4 6h7M14 4c-2 3-2 6 0 9M20 4c2 3 2 6 0 9" stroke="#dcb64e" strokeWidth="2" fill="none" />
      <circle cx="17" cy="8" r="2" fill="#dcb64e" />
      <path d="M2 20c5-5 9 3 13 2s6-3 10-2" stroke="#7f9cd8" fill="none" />
    </g>
  ),
  map: (
    <g>
      <path d="M2 5l8-3 1 8 13 3-4 12H6L1 16z" fill="#b6c6e2" stroke="#c8cdd8" />
      <path d="M10 1h15v9l-5 3-9-3z" fill="#a4adbd" />
    </g>
  ),
  parallel: (
    <g fill="none">
      <path d="M.5.500h25v25H.5zM13 0v26" stroke="#b4b4b4" />
      <path d="M1 5l12 6 12-5M1 22l12-7 12 8M1 14l12-2 12 6M1 3l12 9 12-6" stroke="#a9bfe6" strokeWidth="1.500" />
    </g>
  ),
};

const GRAPH_TYPES = [
  ["points", "smoother", "fit", "ellipse", "contour"],
  ["*line", "bar", "area", "*box", "hist"],
  ["heat", "pie", "treemap", "mosaic"],
  ["caption", "-formula", "-map", "-parallel"],
];

const GraphTitle = styled.h3`
  flex: none;
  height: 26px;
  margin: 0 150px 0 49px;
  font-size: 13px;
  font-weight: 700;
  line-height: 24px;
  text-align: center;
`;

const ChartGrid = styled.div`
  display: grid;
  grid-template-columns: 49px minmax(0, 1fr) 33px 99px;
  grid-template-rows: 33px minmax(0, 1fr) 50px;
  flex: 1;
  min-height: 0;
`;

const Zone = styled.div<{ $set?: boolean; $vertical?: boolean }>`
  display: grid;
  place-items: center;
  min-width: 0;
  border: 1px solid ${(p) => (p.$set ? "#dad9cc" : "#888")};
  color: #8a8a8a;
  font-weight: 700;
  font-style: ${(p) => (p.$set ? "italic" : "normal")};
  text-align: center;
  white-space: nowrap;
  ${(p) => p.$vertical && css`writing-mode: vertical-rl;`}
`;
const GroupX = styled(Zone)`margin: 0 2px 1px 1px;`;
const Wrap = styled(Zone)`margin: 0 1px 1px 0;`;
const GroupY = styled(Zone)`margin: 1px 1px 0 0; padding-bottom: 10px;`;
const MapShape = styled(Zone)`margin: 0 1px 2px 0; line-height: 15px; white-space: normal;`;

const SideZones = styled.div`
  grid-row: 1 / span 3;
  grid-column: 4;
  display: flex;
  flex-direction: column;
  gap: 2px;
  margin-top: -1px;
  ${Zone} { height: 31px; }
  ${Zone}:nth-child(-n + 2) { height: 33px; margin-bottom: -1px; }
`;

const Legend = styled.div`
  padding: 4px 0 0 6px;
`;
const LegendItem = styled.div`
  display: flex;
  align-items: center;
  gap: 7px;
  margin-top: 3px;
  padding-left: 4px;
`;
const BoxGlyph = () => (
  <svg width="12" height="12"><path d="M.5 3.500h10v5H.5zM5.500 0v3M5.500 9v3" fill="none" stroke="#000" /></svg>
);

const AxisCell = styled.div`
  display: flex;
  align-items: center;
  svg { overflow: visible; }
`;
const AxisTitle = styled.span`
  flex: none;
  width: 23px;
  padding-right: 9px;
  writing-mode: vertical-rl;
  transform: rotate(180deg);
`;

const XAxis = styled.div`
  display: grid;
  grid-template-columns: 1fr 1fr;
  grid-template-rows: 14px 15px;
  text-align: center;
  > :last-child { grid-column: 1 / -1; }
`;

const PlotFrame = styled.div`
  border: 1px solid #999;
  background: #fff;
`;

const Y_MAX = 70.88;
const yAt = (v: number) => `${((Y_MAX - v) / (Y_MAX - 50)) * 100}%`;
const BOXES = [
  { x: 25, lo: 55, q1: 59.75, med: 61.5, q3: 63.25, hi: 66 },
  { x: 75, lo: 58, q1: 61.75, med: 64.5, q3: 67.25, hi: 70 },
];
const MEANS = [[62, 69], [62.5, 68], [62.6, 65.3], [63, 65.2], [59, 61.25], [58.6, 57.4]];
const HALF = 12.4;

const Plot = () => (
  <svg width="100%" height="100%" role="img" aria-label="Box plot of height by sex">
    <g stroke="#000" shapeRendering="crispEdges">
      {BOXES.map((b) => {
        const l = `${b.x - HALF}%`;
        const r = `${b.x + HALF}%`;
        const c = `${b.x}%`;
        return (
          <g key={b.x}>
            {[b.lo, b.q1, b.med, b.q3, b.hi].map((v) => (
              <line key={v} x1={l} x2={r} y1={yAt(v)} y2={yAt(v)} />
            ))}
            <line x1={l} x2={l} y1={yAt(b.q1)} y2={yAt(b.q3)} />
            <line x1={r} x2={r} y1={yAt(b.q1)} y2={yAt(b.q3)} />
            <line x1={c} x2={c} y1={yAt(b.lo)} y2={yAt(b.q1)} />
            <line x1={c} x2={c} y1={yAt(b.q3)} y2={yAt(b.hi)} />
          </g>
        );
      })}
    </g>
    {MEANS.map(([f, m]) => (
      <line key={f} x1="25%" x2="75%" y1={yAt(f)} y2={yAt(m)} stroke="#4070e0" strokeWidth="2" />
    ))}
    <circle cx="25%" cy={yAt(52)} r="3" />
  </svg>
);

const YAxis = () => (
  <svg width="26" height="100%" fontSize="11">
    {[70, 67.5, 65, 62.5, 60, 57.5, 55, 52.5, 50].map((v) => (
      <g key={v}>
        <line x1={v % 5 ? 23 : 20} x2="26" y1={yAt(v)} y2={yAt(v)} stroke="#999" shapeRendering="crispEdges" />
        {v % 5 === 0 && <text x="18" y={yAt(v)} dy="3" textAnchor="end">{v}</text>}
      </g>
    ))}
  </svg>
);

const BuilderWindow = () => (
  <Window $bleed={26}>
    <TitleBar $h={29} $pad={8}>
      <Drawing name="graph" />
      <WindowName>Big Class - Graph Builder - JMP Pro</WindowName>
      <Captions />
    </TitleBar>
    <Menus pad={7} />
    <ToolBar $pad={3}>
      <Tools items={FILE_TOOLS} />
      <Tools items="-rerun -compare -addGraph" />
      <Tools items="*arrow help plus scroller | hand brush lasso zoom cross -ruler | text lines polygon oval" />
    </ToolBar>
    <BuilderBody>
      <OutlineRow>
        <Disclosure label="Graph Builder" />
        <OutlineHead $big>
          <RedTriangle label="Graph Builder menu" />
          <span>Graph Builder</span>
        </OutlineHead>
      </OutlineRow>
      <BuilderMain>
        <Controls>
          <ButtonRow>
            <PushButton>Undo</PushButton>
            <PushButton>Start Over</PushButton>
            <PushButton>Done</PushButton>
          </ButtonRow>
          <ColumnsHead>
            <RedTriangle label="Columns menu" />
            6 Columns
          </ColumnsHead>
          <ColumnsBox>
            {COLUMNS.map(([n, t]) => (
              <ColumnItem key={n}>
                <TypeIcon type={t} />
                <span>{n}</span>
              </ColumnItem>
            ))}
          </ColumnsBox>
          <OutlineRow $nested>
            <Disclosure label="Box Plot" />
            <OutlineHead>
              <RedTriangle label="Box Plot menu" />
              <span>Box Plot</span>
            </OutlineHead>
          </OutlineRow>
          <Settings>
            <SettingRow label="Jitter" value="Auto" />
            <SettingRow label="Outliers" check />
            <SettingRow label="Box Type" value="Outlier" />
            <SettingRow label="Box Style" value="Normal" />
            <SettingRow label="5 Number Summary" check={false} />
            <SettingRow label="Width Proportion" field="0" />
            <Variables checked={[true, true, false, false]} selected={3} />
          </Settings>
          <OutlineRow $nested>
            <Disclosure label="Line" />
            <OutlineHead>
              <RedTriangle label="Line menu" />
              <span>Line</span>
            </OutlineHead>
          </OutlineRow>
          <Settings>
            <SettingRow label="Row order" check={false} />
            <SettingRow label="Connection" value="Line" />
            <SettingRow label="Summary Statistic" value="Mean" />
            <SettingRow label="Stack" check={false} />
            <SettingRow label="Fill" value="None" />
            <SettingRow label="Error Interval" value="Auto" />
            <SettingRow label="Interval Style" value="Error Bar" />
            <SettingRow label="Missing Factors" value="Skip" />
            <SettingRow label="Missing Values" value="Connect Through" />
            <Variables checked={[true, true, true, true]} />
          </Settings>
        </Controls>
        <Graph>
          <TypeBar>
            {GRAPH_TYPES.map((g, i) => (
              <TypeGroup key={i}>
                {g.map((t) => {
                  const name = t.replace(/^[-*]/, "");
                  return (
                    <TypeButton key={t} $on={t[0] === "*"} $off={t[0] === "-"} aria-label={name}>
                      <svg width="26" height="26" viewBox="0 0 26 26">{typeDrawings[name]}</svg>
                    </TypeButton>
                  );
                })}
              </TypeGroup>
            ))}
          </TypeBar>
          <GraphTitle>height &amp; Mean(height) vs. sex</GraphTitle>
          <ChartGrid>
            <span />
            <GroupX>Group X</GroupX>
            <Wrap>Wrap</Wrap>
            <SideZones>
              <Zone $set>Overlay: age</Zone>
              <Zone $set>Color: Column 6</Zone>
              <Zone>Size</Zone>
              <Zone>Interval</Zone>
              <Legend>
                Column 6
                <LegendItem><BoxGlyph />height</LegendItem>
              </Legend>
            </SideZones>
            <AxisCell>
              <AxisTitle>height</AxisTitle>
              <YAxis />
            </AxisCell>
            <PlotFrame><Plot /></PlotFrame>
            <GroupY $vertical>Group Y</GroupY>
            <MapShape>Map Shape</MapShape>
            <XAxis>
              <span>F</span>
              <span>M</span>
              <span>sex</span>
            </XAxis>
          </ChartGrid>
        </Graph>
      </BuilderMain>
    </BuilderBody>
    <StatusBar $h={29} />
  </Window>
);

/* ---------- legend settings dialog ---------- */

const Dialog = styled.section`
  position: absolute;
  top: 605px;
  right: -8px;
  width: 363px;
  height: 302px;
  border: 1px solid #666;
  background: #f8f8f8;
  box-shadow: 0 0 14px rgba(0, 0, 0, 0.35);
`;
const DialogBar = styled.header`
  display: flex;
  align-items: center;
  gap: 5px;
  height: 30px;
  padding: 0 13px 1px 8px;
  background: #fff;
  h2 { flex: 1; margin: 0; font-size: 12px; font-weight: 400; }
`;
const DialogBody = styled.div`
  display: flex;
  gap: 6px;
  padding: 5px 18px 0 17px;
`;
const DialogForm = styled.div`
  width: 216px;
`;
const TitleRow = styled.div`
  display: flex;
  gap: 3px;
  height: 23px;
  label { flex: none; width: 25px; }
  ${Field} { width: 150px; margin-top: 2px; }
`;
const ItemsRow = styled.div`
  display: flex;
  gap: 1px;
  margin-bottom: 5px;
`;
const LegendList = styled(List)`
  width: 179px;
  height: 52px;
  padding: 1px 5px;
  border: 1px solid #000;
  background: #fff;
  li { display: grid; grid-template-columns: 25px 19px 1fr; align-items: center; height: 15px; }
  svg { margin-left: 1px; overflow: visible; }
  label { padding-bottom: 3px; }
`;
const ArrowStack = styled.div`
  display: flex;
  flex-direction: column;
  gap: 4px;
  padding-top: 2px;
`;
const FormGrid = styled.div`
  display: grid;
  grid-template-columns: 76px 135px;
  grid-template-rows: 20px 28px 28px 23px 23px 20px;
  align-items: start;
  padding-left: 5px;
  label, > span { white-space: nowrap; }
  ${SelectWrap}, ${PushButton} { margin: 2px 2px 0; }
  ${PushButton} { grid-column: 2; }
`;
const Swatch = styled.button`
  height: 13px;
  margin-top: 3px;
  border: 1px solid #777;
  background: #000;
`;
const Preview = styled.fieldset`
  width: 104px;
  height: 211px;
  margin: 2px 0 0;
  padding: 9px 8px;
  border: 1px solid #aaa;
  border-radius: 3px;
  legend { padding: 0 4px 0 0; margin-left: -1px; }
`;
const DialogButtons = styled.div`
  display: flex;
  justify-content: flex-end;
  gap: 4px;
  padding: 13px 18px 0 0;
`;

const LegendDialog = () => (
  <Dialog role="dialog" aria-label="Legend Settings">
    <DialogBar>
      <svg width="16" height="14"><path d="M0 0h9v13H0z" fill="#2fb84a" /><path d="M0 4.500h9M0 8.500h9" stroke="#8be09a" /><path d="M16 7l-5 2-2 5-1-5-2-3 4 0 2-4 0 4z" fill="#1673b5" /><circle cx="7" cy="3" r="2" fill="#222" /></svg>
      <h2>Legend Settings</h2>
      <Bare aria-label="Close dialog">
        <svg width="11" height="11"><path d="M0 0l11 11M11 0L0 11" stroke="#000" /></svg>
      </Bare>
    </DialogBar>
    <DialogBody>
      <DialogForm>
        <TitleRow>
          <label htmlFor="legend-title">Title:</label>
          <Field id="legend-title" defaultValue="Column 6" />
        </TitleRow>
        <ItemsRow>
          <LegendList>
            <li><Check id="it-box" defaultChecked /><BoxGlyph /><label htmlFor="it-box">height</label></li>
            <li><Check id="it-dot" /><svg width="12" height="12"><circle cx="5" cy="6" r="3" /></svg><label htmlFor="it-dot">height</label></li>
            <li><Check id="it-line" /><svg width="12" height="12"><path d="M-5 6h20" stroke="#4070e0" strokeWidth="2" /></svg><label htmlFor="it-line">1</label></li>
          </LegendList>
          <ArrowStack>
            <ArrowButton />
            <ArrowButton down />
          </ArrowStack>
        </ItemsRow>
        <FormGrid>
          <span>Color Theme</span>
          <Swatch aria-label="Color Theme" />
          <label htmlFor="title-pos">Title Position:</label>
          <Select id="title-pos" value="Top" tall />
          <label htmlFor="item-dir">Item Direction:</label>
          <Select id="item-dir" value="Vertical" tall />
          <label htmlFor="item-wrap">Item Wrap:</label>
          <Field id="item-wrap" defaultValue="0" $right />
          <label htmlFor="max-items">Max Items</label>
          <Field id="max-items" defaultValue="60" $right />
          <PushButton>Font...</PushButton>
        </FormGrid>
      </DialogForm>
      <Preview>
        <legend>Preview</legend>
        Column 6
        <LegendItem><BoxGlyph />height</LegendItem>
      </Preview>
    </DialogBody>
    <DialogButtons>
      <PushButton $primary>OK</PushButton>
      <PushButton>Cancel</PushButton>
      <PushButton>Help</PushButton>
    </DialogButtons>
  </Dialog>
);

export default function App() {
  return (
    <>
      <Global />
      <Desktop>
        <TableWindow />
        <DesktopGap />
        <BuilderWindow />
        <LegendDialog />
      </Desktop>
    </>
  );
}
